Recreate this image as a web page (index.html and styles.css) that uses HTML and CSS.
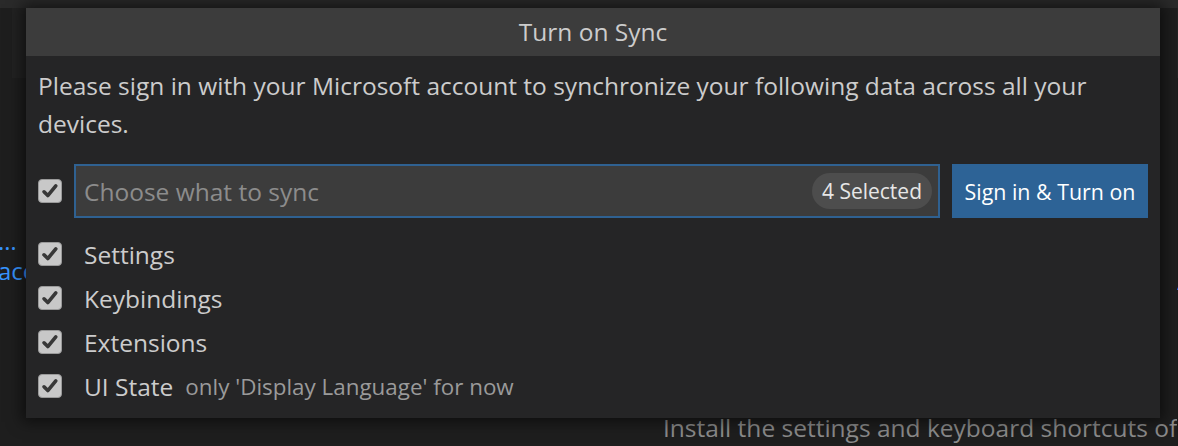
FILE: index.html
```html
<!DOCTYPE html>
<html>
<head>
<meta charset="utf-8">
<link rel="stylesheet" href="styles.css">
</head>
<body>
<div class="workbench">
  <div class="topstrip"></div>
  <div class="main">
    <div class="left-col">
      <div class="left-block"></div>
      <div class="left-links">
        <div class="link">…</div>
        <div class="link">ace</div>
      </div>
    </div>
    <div class="center-col">
      <div class="bottom-text">Install the settings and keyboard shortcuts of</div>
    </div>
    <div class="right-col">
      <div class="right-block"></div>
      <div class="right-panel"><span class="link">Az</span></div>
    </div>
  </div>
</div>

<div class="dialog">
  <div class="dialog-title">Turn on Sync</div>
  <div class="dialog-body">
    <p class="message">Please sign in with your Microsoft account to synchronize your following data across all your devices.</p>
    <div class="input-row">
      <span class="checkbox"><svg viewBox="0 0 24 24" width="24" height="24"><path d="M6 12.8 L9.8 16.6 L17.8 6.8" fill="none" stroke="#383838" stroke-width="3.6" stroke-linecap="round" stroke-linejoin="round"/></svg></span>
      <div class="input">
        <span class="placeholder">Choose what to sync</span>
        <span class="badge">4 Selected</span>
      </div>
      <button class="primary">Sign in &amp; Turn on</button>
    </div>
    <ul class="items">
      <li class="item"><span class="checkbox"><svg viewBox="0 0 24 24" width="24" height="24"><path d="M6 12.8 L9.8 16.6 L17.8 6.8" fill="none" stroke="#383838" stroke-width="3.6" stroke-linecap="round" stroke-linejoin="round"/></svg></span><span class="label">Settings</span></li>
      <li class="item"><span class="checkbox"><svg viewBox="0 0 24 24" width="24" height="24"><path d="M6 12.8 L9.8 16.6 L17.8 6.8" fill="none" stroke="#383838" stroke-width="3.6" stroke-linecap="round" stroke-linejoin="round"/></svg></span><span class="label">Keybindings</span></li>
      <li class="item"><span class="checkbox"><svg viewBox="0 0 24 24" width="24" height="24"><path d="M6 12.8 L9.8 16.6 L17.8 6.8" fill="none" stroke="#383838" stroke-width="3.6" stroke-linecap="round" stroke-linejoin="round"/></svg></span><span class="label">Extensions</span></li>
      <li class="item"><span class="checkbox"><svg viewBox="0 0 24 24" width="24" height="24"><path d="M6 12.8 L9.8 16.6 L17.8 6.8" fill="none" stroke="#383838" stroke-width="3.6" stroke-linecap="round" stroke-linejoin="round"/></svg></span><span class="label">UI State</span><span class="desc">only 'Display Language' for now</span></li>
    </ul>
  </div>
</div>
</body>
</html>
```

FILE: styles.css
```css
* { box-sizing: border-box; }
html, body {
  margin: 0;
  padding: 0;
  width: 1178px;
  height: 446px;
  overflow: hidden;
  background: #1e1e1e;
  font-family: "Open Sans", "Noto Sans", sans-serif;
}

.workbench {
  display: flex;
  flex-direction: column;
  width: 1178px;
  height: 446px;
}
.topstrip {
  height: 8px;
  background: #2a2a2a;
}
.main {
  flex: 1;
  display: flex;
}
.left-col {
  width: 30px;
  background: #1e1e1e;
  display: flex;
  flex-direction: column;
}
.left-block {
  height: 70px;
  margin-left: 12px;
  background: #222;
}
.left-links {
  margin-top: 148px;
  font-size: 24px;
  line-height: 30px;
}
.link { color: #3794ff; }
.left-links .link { margin-left: -2px; white-space: nowrap; }
.center-col {
  flex: 1;
  display: flex;
  flex-direction: column;
  justify-content: flex-end;
  background: #1e1e1e;
}
.bottom-text {
  margin-left: 633px;
  height: 32px;
  font-size: 24.5px;
  line-height: 28px;
  color: #8b8b8b;
  white-space: nowrap;
}
.right-col {
  width: 18px;
  display: flex;
  flex-direction: column;
  background: #1c1c1c;
}
.right-block {
  height: 70px;
  background: #232323;
}
.right-panel {
  margin-top: 186px;
  font-size: 24px;
  white-space: nowrap;
  overflow: hidden;
}

/* dialog */
.dialog {
  position: absolute;
  left: 26px;
  top: 8px;
  width: 1134px;
  height: 410px;
  background: #252526;
  box-shadow: 0 0 14px 4px rgba(0,0,0,0.55);
  display: flex;
  flex-direction: column;
}
.dialog-title {
  height: 48px;
  background: #3c3c3c;
  color: #cccccc;
  font-size: 24.5px;
  line-height: 48px;
  text-align: center;
}
.dialog-body {
  padding: 11px 12px 10px 12px;
  display: flex;
  flex-direction: column;
}
.message {
  margin: 0;
  color: #cccccc;
  font-size: 24.5px;
  line-height: 38px;
}
.input-row {
  margin-top: 21px;
  display: flex;
  align-items: center;
  gap: 12px;
  height: 54px;
}
.checkbox {
  width: 24px;
  height: 24px;
  flex: none;
  border: 1px solid #9a9a9a;
  border-radius: 4px;
  background: #c8c8c8;
  display: flex;
  align-items: center;
  justify-content: center;
  overflow: hidden;
}
.checkbox svg { display: block; flex: none; }
.input {
  flex: 1;
  height: 54px;
  background: #3c3c3c;
  border: 2px solid #2f6191;
  display: flex;
  align-items: center;
  justify-content: space-between;
  padding: 0 6px 0 8px;
}
.placeholder {
  color: #8c8c8c;
  font-size: 24.5px;
}
.badge {
  background: #4d4d4d;
  color: #e6e6e6;
  font-size: 21px;
  height: 36px;
  line-height: 36px;
  padding: 0 10px;
  border-radius: 18px;
}
.primary {
  width: 196px;
  height: 54px;
  background: #2d6396;
  color: #ffffff;
  border: none;
  font-family: inherit;
  font-size: 21.4px;
  padding: 0;
}
.items {
  list-style: none;
  margin: 14px 0 0 0;
  padding: 0;
}
.item {
  height: 44px;
  display: flex;
  align-items: center;
}
.item .label {
  margin-left: 22px;
  color: #cccccc;
  font-size: 24.5px;
}
.item .desc {
  margin-left: 12px;
  color: #9a9a9a;
  font-size: 22.4px;
}
```
